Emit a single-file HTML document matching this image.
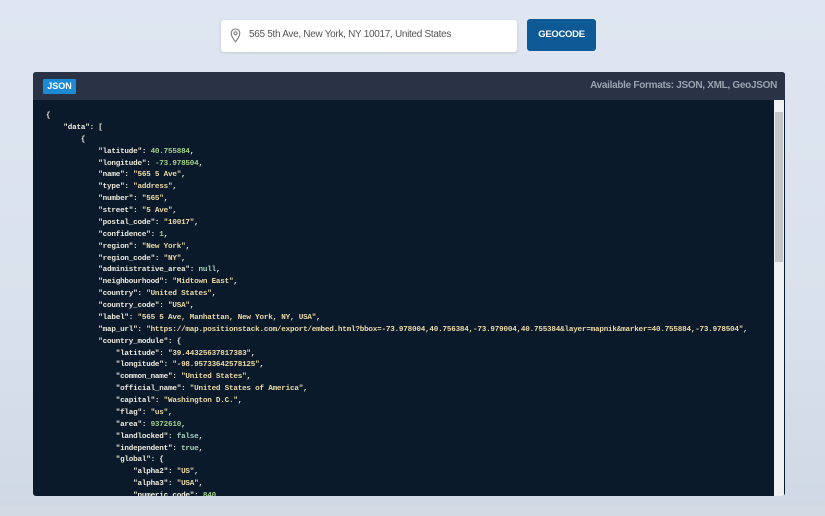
<!DOCTYPE html>
<html><head><meta charset="utf-8"><style>
*{margin:0;padding:0;box-sizing:border-box}
html,body{width:825px;height:516px;overflow:hidden}
body{background:linear-gradient(180deg,#dfe6f1 0%,#d9e1ec 60%,#cfd8e4 100%);font-family:"Liberation Sans",sans-serif;position:relative}
.search{position:absolute;left:221px;top:20px;width:296px;height:32px;background:#fff;border-radius:3px;box-shadow:0 1px 3px rgba(0,0,0,.12)}
.search span{position:absolute;left:28px;top:9px;font-size:10px;color:#555;letter-spacing:-0.3px}
.search svg{position:absolute;left:9px;top:8px}
.btn{position:absolute;left:527px;top:19px;width:69px;height:32px;background:#0d5a96;border-radius:3px;color:#fff;font-size:9.5px;font-weight:bold;text-align:center;line-height:32px;letter-spacing:-0.3px}
.panel{position:absolute;left:33px;top:72px;width:752px;height:424px;background:#0b1a2a;border-radius:3px;overflow:hidden}
.head{height:28px;background:#2a3245;position:relative}
.badge{position:absolute;left:10px;top:7px;width:33px;height:15px;background:#1a8ad4;color:#fff;font-size:9px;font-weight:bold;text-align:center;line-height:15px;border-radius:1px}
.fmt{position:absolute;right:8px;top:8px;font-size:10px;font-weight:bold;color:#9aa2b0;letter-spacing:-0.3px}
pre{position:absolute;left:13px;top:39px;font-family:"Liberation Mono",monospace;font-size:7.6px;letter-spacing:-0.2px;line-height:11.88px;color:#ece9dc;font-weight:bold}
.s{color:#ead9a4}.n{color:#9dce86}.b{color:#a5d4bb}
.sb{position:absolute;left:741px;top:28px;width:10px;height:396px;background:#eef0f2}
.th{position:absolute;left:742px;top:40px;width:8px;height:150px;background:#c6c6c6}
.bottom{position:absolute;left:0;top:506px;width:825px;height:10px;background:#d3dae4}
</style></head><body>
<div class="search"><svg width="11" height="15" viewBox="0 0 11 15"><path d="M5.5 1C3 1 1.2 2.9 1.2 5.3 1.2 8.5 5.5 13.8 5.5 13.8S9.8 8.5 9.8 5.3C9.8 2.9 8 1 5.5 1Z" fill="none" stroke="#777" stroke-width="1.1"/><circle cx="5.5" cy="5.3" r="1.6" fill="none" stroke="#777" stroke-width="1"/></svg><span>565 5th Ave, New York, NY 10017, United States</span></div>
<div class="btn">GEOCODE</div>
<div class="panel">
<div class="head"><div class="badge">JSON</div><div class="fmt">Available Formats: JSON, XML, GeoJSON</div></div>
<pre>{
    "data": [
        {
            "latitude": <span class="n">40.755884</span>,
            "longitude": <span class="n">-73.978504</span>,
            "name": <span class="s">"565 5 Ave"</span>,
            "type": <span class="s">"address"</span>,
            "number": <span class="s">"565"</span>,
            "street": <span class="s">"5 Ave"</span>,
            "postal_code": <span class="s">"10017"</span>,
            "confidence": <span class="n">1</span>,
            "region": <span class="s">"New York"</span>,
            "region_code": <span class="s">"NY"</span>,
            "administrative_area": <span class="b">null</span>,
            "neighbourhood": <span class="s">"Midtown East"</span>,
            "country": <span class="s">"United States"</span>,
            "country_code": <span class="s">"USA"</span>,
            "label": <span class="s">"565 5 Ave, Manhattan, New York, NY, USA"</span>,
            "map_url": <span class="s">"https://map.positionstack.com/export/embed.html?bbox=-73.978004,40.756384,-73.979004,40.755384&amp;layer=mapnik&amp;marker=40.755884,-73.978504"</span>,
            "country_module": {
                "latitude": <span class="s">"39.44325637817383"</span>,
                "longitude": <span class="s">"-98.95733642578125"</span>,
                "common_name": <span class="s">"United States"</span>,
                "official_name": <span class="s">"United States of America"</span>,
                "capital": <span class="s">"Washington D.C."</span>,
                "flag": <span class="s">"us"</span>,
                "area": <span class="n">9372610</span>,
                "landlocked": <span class="b">false</span>,
                "independent": <span class="b">true</span>,
                "global": {
                    "alpha2": <span class="s">"US"</span>,
                    "alpha3": <span class="s">"USA"</span>,
                    "numeric_code": <span class="n">840</span>,
</pre>
<div class="sb"></div><div class="th"></div>
</div>
<div class="bottom"></div>
</body></html>
